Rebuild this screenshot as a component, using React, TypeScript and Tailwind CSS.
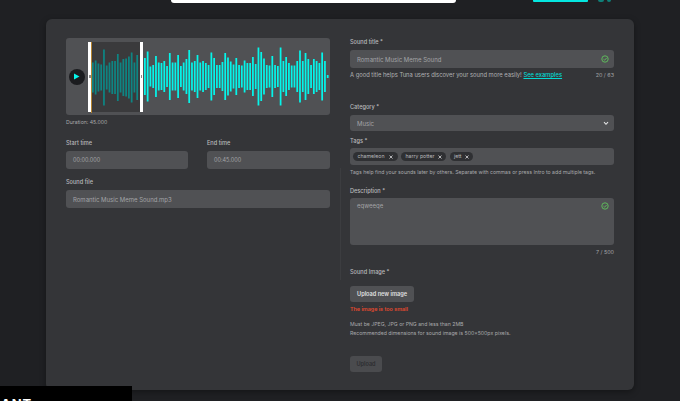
const selected = [30, 34, 28, 26, 56, 24, 30, 33, 33, 47, 30, 37, 38, 42, 50, 30, 45, 30];
const rest = [37, 50, 20, 23, 41, 28, 27, 31, 21, 47, 28, 28, 43, 21, 28, 35, 53, 28, 31, 43, 28, 31, 27, 23, 48, 37, 23, 23, 29, 47, 38, 30, 24, 37, 23, 22, 32, 27, 27, 39, 25, 58, 49, 36, 23, 22, 41, 23, 21, 58, 31, 39, 27, 22, 22, 31, 52, 31, 47, 35, 23, 35, 31, 27, 48, 31, 3];

function Label({ children, className = "" }: { children: React.ReactNode; className?: string }) {
  return <div className={`h-[8px] text-[5.6px] leading-[8px] font-medium text-[#b9babc] ${className}`}>{children}</div>;
}

function Waveform() {
  return (
    <div className="relative h-[77px] w-full rounded-[3px] bg-[#505154]">
      <svg className="absolute left-0 top-0" width="264" height="77" viewBox="0 0 264 77">
        {rest.map((h, i) => (
          <rect key={i} x={78 + i * 2.77} y={38.5 - h / 2} width="1.75" height={h} fill="#05f5ea" />
        ))}
      </svg>
      <div className="absolute left-[22px] top-[3.5px] flex h-[70.5px] w-[55px] border-x-[3.5px] border-white bg-[#3a3a3c]">
        <svg className="shrink-0" width="48" height="71" viewBox="0 0 48 71">
          {selected.map((h, i) => (
            <rect key={i} x={1 + i * 2.77} y={35.5 - h / 2} width="1.75" height={h} fill="#0e8583" />
          ))}
          <rect x="0" y="0" width="1" height="71" fill="#b5832f" />
        </svg>
      </div>
      <div className="absolute left-[23px] top-[37px] h-[3px] w-[1.5px] bg-[#8a8a8a]" />
      <div className="absolute left-[74.5px] top-[37px] h-[3px] w-[1.5px] bg-[#8a8a8a]" />
      <div className="absolute left-[2.5px] top-[30.5px] flex h-4 w-4 items-center justify-center rounded-full bg-[#1b1c1f]">
        <svg width="7" height="7" viewBox="0 0 7 7"><path d="M1 0.5 L6.5 3.5 L1 6.5 Z" fill="#05f5ea" /></svg>
      </div>
    </div>
  );
}

function Input({ value, className = "", children }: { value: string; className?: string; children?: React.ReactNode }) {
  return (
    <div className={`flex h-[18px] items-center rounded-[3px] bg-[#505154] px-[7px] text-[6px] text-[#a3a4a7] ${className}`}>
      <span>{value}</span>
      {children}
    </div>
  );
}

function Check() {
  return (
    <svg width="8" height="8" viewBox="0 0 8 8" fill="none" stroke="#5fb85c" strokeWidth="1">
      <circle cx="4" cy="4" r="3.2" />
      <path d="M2.5 4.2 L3.6 5.2 L5.6 3" />
    </svg>
  );
}

function Chip({ text, width }: { text: string; width: string }) {
  return (
    <div className={`flex h-[9.5px] items-center justify-between rounded-full bg-[#2f3033] px-[4.5px] text-[5.2px] text-[#b9babc] ${width}`}>
      <span>{text}</span>
      <svg width="4" height="4" viewBox="0 0 4 4" stroke="#d5d6d8" strokeWidth="0.8"><path d="M0.5 0.5 L3.5 3.5 M3.5 0.5 L0.5 3.5" /></svg>
    </div>
  );
}

export default function App() {
  return (
    <div className="relative h-[401px] w-[680px] overflow-hidden bg-[#1f2023] font-['Inter','Liberation_Sans',sans-serif]">
      <div className="flex h-[19px] items-start">
        <div className="ml-[171px] h-[3px] w-[285px] rounded-b-[5px] bg-white" />
        <div className="ml-[77px] h-[2px] w-[55px] rounded-b-[1px] bg-[#04e6e0]" />
        <div className="ml-[10px] h-[2px] w-[6px] rounded-b-[2px] bg-[#0f7f78]" />
        <div className="ml-[3px] h-[2px] w-[4px] rounded-b-[2px] bg-[#0f7f78]" />
      </div>

      <div className="ml-[46px] flex h-[371px] w-[588px] rounded-[6px] bg-[#343538] pl-5 pt-[19px] shadow-[0_2px_6px_rgba(0,0,0,0.35)]">
        {/* Left column */}
        <div className="w-[264px] shrink-0">
          <Waveform />
          <div className="mt-[3px] h-[8px] text-[5.2px] leading-[8px] text-[#a8a9ab]">Duration: 45.000</div>
          <div className="mt-[13px] flex gap-[19px]">
            <div className="w-[122px]">
              <Label>Start time</Label>
              <Input value="00:00.000" className="mt-[4px] text-[5.5px]!" />
            </div>
            <div className="w-[123px]">
              <Label>End time</Label>
              <Input value="00:45.000" className="mt-[4px] text-[5.5px]!" />
            </div>
          </div>
          <Label className="mt-[9px]">Sound file</Label>
          <Input value="Romantic Music Meme Sound.mp3" className="mt-[4px]" />
        </div>

        <div className="ml-[9.5px] mt-[130px] h-[112px] w-px shrink-0 bg-[#3c3d40]" />

        {/* Right column */}
        <div className="ml-[9.5px] w-[264px] shrink-0">
          <Label>Sound title *</Label>
          <Input value="Romantic Music Meme Sound" className="mt-[4px] justify-between pr-[5px]">
            <Check />
          </Input>
          <div className="mt-[3px] flex h-[8px] items-center justify-between text-[5.8px] leading-[8px] text-[#b0b1b3]">
            <span>
              A good title helps Tuna users discover your sound more easily!{" "}
              <span className="font-medium text-[#04d9d2] underline">See examples</span>
            </span>
            <span className="text-[5.4px] text-[#a3a4a7]">20 / 63</span>
          </div>
          <Label className="mt-[24px]">Category *</Label>
          <div className="mt-[4px] flex h-[16px] items-center justify-between rounded-[3px] bg-[#505154] pl-[7px] pr-[5px] text-[6px] text-[#a3a4a7]">
            <span>Music</span>
            <svg width="6" height="5" viewBox="0 0 6 5" fill="none" stroke="#e4e5e6" strokeWidth="1.1"><path d="M1 1.2 L3 3.3 L5 1.2" /></svg>
          </div>
          <Label className="mt-[6px]">Tags *</Label>
          <div className="mt-[3px] flex h-[17px] items-center gap-[3.5px] rounded-[3px] bg-[#505154] px-[3px]">
            <Chip text="chameleon" width="w-[44.5px]" />
            <Chip text="harry potter" width="w-[45px]" />
            <Chip text="jett" width="w-[23.5px]" />
          </div>
          <div className="mt-[3px] h-[8px] text-[5.15px] leading-[8px] text-[#a8a9ab]">
            Tags help find your sounds later by others. Separate with commas or press Intro to add multiple tags.
          </div>
          <Label className="mt-[11px]">Description *</Label>
          <div className="mt-[3px] flex h-[47px] items-start justify-between rounded-[3px] bg-[#505154] pl-[7px] pr-[5px] pt-[4px] text-[6px] leading-[8px] text-[#a3a4a7]">
            <span>eqweeqe</span>
            <Check />
          </div>
          <div className="mt-[3px] h-[8px] text-right text-[5.4px] leading-[8px] text-[#a3a4a7]">7 / 500</div>
          <Label className="mt-[12px]">Sound Image *</Label>
          <div className="mt-[10px] flex h-[16px] w-[64px] items-center justify-center rounded-[3px] bg-[#505154] text-[5.6px] font-semibold text-[#e0e1e2]">
            Upload new image
          </div>
          <div className="mt-[3px] h-[8px] text-[5.4px] font-semibold leading-[8px] text-[#e0492f]">The image is too small</div>
          <div className="mt-[7px] text-[5.2px] leading-[8.6px] text-[#a8a9ab]">
            <div>Must be JPEG, JPG or PNG and less than 2MB</div>
            <div>Recommended dimensions for sound image is 500x500px pixels.</div>
          </div>
          <div className="mt-[19px] flex h-[16px] w-[32px] items-center justify-center rounded-[3px] bg-[#4a4b4e] text-[5.6px] font-semibold text-[#2d2e31]">
            Upload
          </div>
        </div>
      </div>

      <div className="absolute bottom-0 left-0 h-[15px] w-[132px] overflow-hidden bg-black pl-[1px] pt-[11px] text-[13px] font-bold leading-[14px] tracking-[1px] text-white">
        ANT
      </div>
    </div>
  );
}
